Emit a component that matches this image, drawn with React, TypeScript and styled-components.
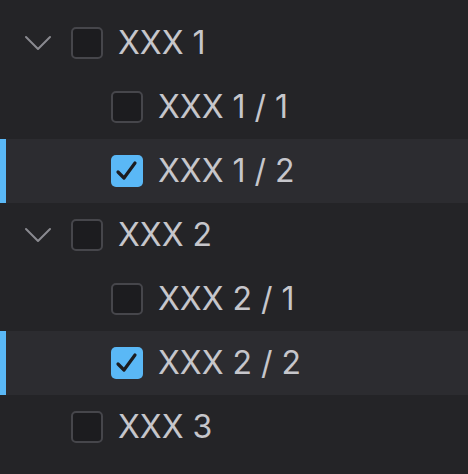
import React from "react";
import styled, { createGlobalStyle } from "styled-components";

const Global = createGlobalStyle`
  html, body { margin: 0; padding: 0; background: #242427; }
  body { font-family: Inter, "Noto Sans", sans-serif; }
`;

const Tree = styled.div`
  width: 468px;
  height: 474px;
  padding-top: 11px;
  box-sizing: border-box;
  background: #242427;
  display: flex;
  flex-direction: column;
`;

const Row = styled.div<{ $selected?: boolean; $level: number }>`
  position: relative;
  height: 64px;
  display: flex;
  align-items: center;
  padding-left: ${(p) => 20 + p.$level * 40}px;
  background: ${(p) => (p.$selected ? "#2c2c30" : "transparent")};
  &::before {
    content: "";
    display: ${(p) => (p.$selected ? "block" : "none")};
    position: absolute;
    left: 0;
    top: 0;
    bottom: 0;
    width: 6px;
    background: #5ab8f6;
  }
`;

const Toggle = styled.div`
  width: 38px;
  height: 30px;
  margin-right: 13px;
  display: flex;
  align-items: center;
  justify-content: flex-start;
  padding-left: 4px;
  box-sizing: border-box;
`;

const Spacer = styled.div`
  width: 51px;
  flex: none;
`;

const Box = styled.div<{ $checked?: boolean }>`
  width: 32px;
  height: 32px;
  box-sizing: border-box;
  border-radius: 5px;
  flex: none;
  display: flex;
  align-items: center;
  justify-content: center;
  background: ${(p) => (p.$checked ? "#5ab8f6" : "#1c1c1f")};
  border: ${(p) => (p.$checked ? "none" : "2px solid #46464b")};
`;

const Label = styled.span`
  margin-left: 15px;
  font-size: 32px;
  color: #c6c6cb;
  letter-spacing: 0;
  line-height: 1;
`;

type Item = { label: string; level: number; checked?: boolean; parent?: boolean };

const items: Item[] = [
  { label: "XXX 1", level: 0, parent: true },
  { label: "XXX 1 / 1", level: 1 },
  { label: "XXX 1 / 2", level: 1, checked: true },
  { label: "XXX 2", level: 0, parent: true },
  { label: "XXX 2 / 1", level: 1 },
  { label: "XXX 2 / 2", level: 1, checked: true },
  { label: "XXX 3", level: 0 },
];

const Chevron = () => (
  <svg width="28" height="17" viewBox="0 0 28 17" fill="none">
    <path d="M2 2 L14 14 L26 2" stroke="#8a8a90" strokeWidth="2" strokeLinecap="round" strokeLinejoin="round" />
  </svg>
);

const Check = () => (
  <svg width="32" height="32" viewBox="0 0 32 32" fill="none">
    <path d="M7 17 L13 23 L24 8" stroke="#1c1c1f" strokeWidth="3.2" strokeLinecap="round" strokeLinejoin="round" />
  </svg>
);

export default function App() {
  return (
    <>
      <Global />
      <Tree>
        {items.map((it) => (
          <Row key={it.label} $level={it.level} $selected={it.checked}>
            {it.parent ? (
              <Toggle>
                <Chevron />
              </Toggle>
            ) : (
              <Spacer />
            )}
            <Box $checked={it.checked}>{it.checked && <Check />}</Box>
            <Label>{it.label}</Label>
          </Row>
        ))}
      </Tree>
    </>
  );
}
